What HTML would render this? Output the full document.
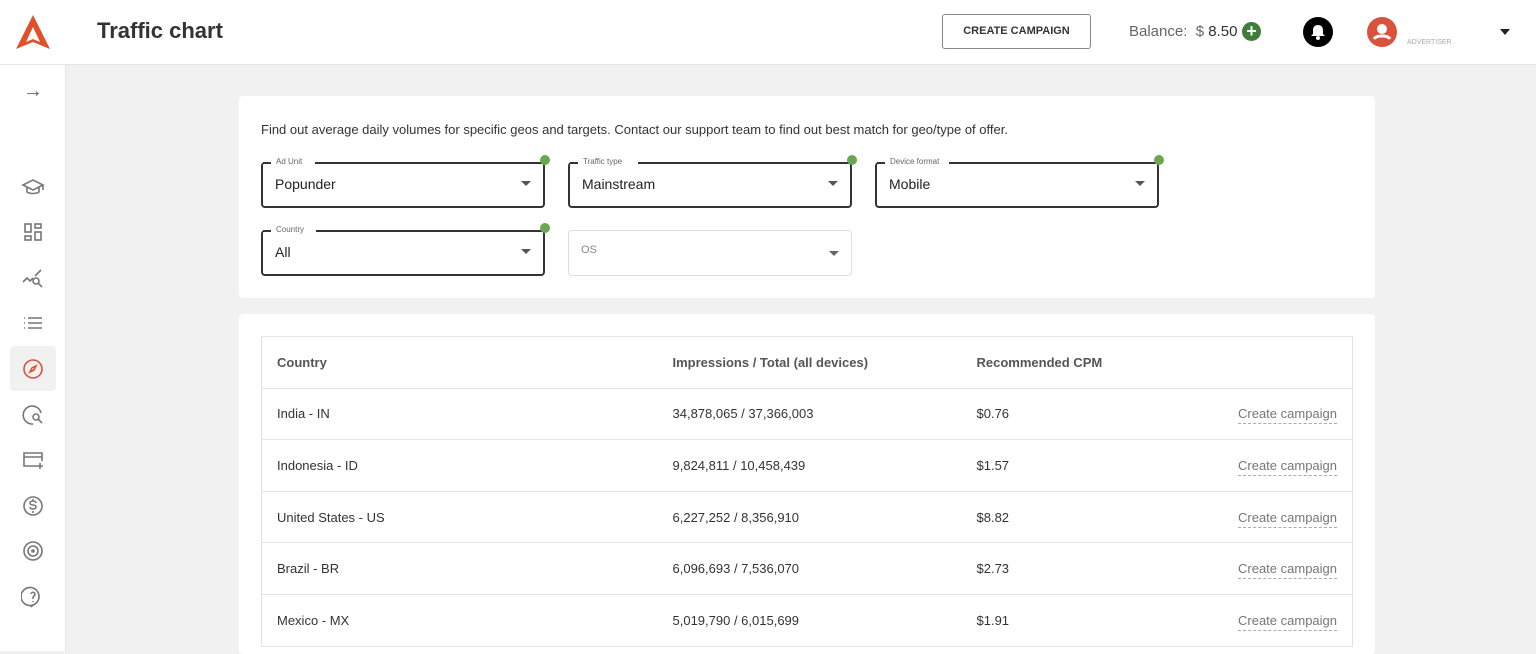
<!DOCTYPE html>
<html><head><style>
*{box-sizing:border-box;margin:0;padding:0}
body{width:1536px;height:651px;overflow:hidden;background:#f1f1f1;font-family:"Liberation Sans",sans-serif;color:#333;position:relative}
.hdr{position:absolute;left:0;top:0;width:1536px;height:65px;background:#fff;border-bottom:1px solid #e6e6e6}
.side{position:absolute;left:0;top:65px;width:66px;height:586px;background:#fff;border-right:1px solid #e6e6e6}
.ic{position:absolute;left:21px;width:24px;height:24px}
.card{position:absolute;background:#fff;border-radius:4px}
.fld{position:absolute;height:46px;border:2px solid #333;border-top:none;border-radius:4px}
.fld .lbl{position:absolute;top:-5px;left:10px;font-size:8px;color:#666;background:#fff;padding:0 3px;line-height:10px}
.fld .tl{position:absolute;top:0;height:2px;background:#333}
.fld .v{position:absolute;left:12px;top:14px;font-size:14px;color:#222}
.fld .ar{position:absolute;right:12px;top:19px;border-left:5px solid transparent;border-right:5px solid transparent;border-top:5px solid #555}
.dot{position:absolute;width:10px;height:10px;border-radius:50%;background:#6aa84f;right:-7px;top:-7px}
table{position:absolute;left:261px;top:336px;width:1092px;border-collapse:collapse;font-size:13px}
td{border-top:1px solid #e3e3e3;height:51.6px;padding-left:15px;color:#333}
tr:first-child td{color:#555;font-weight:bold}
td.c{text-align:right;padding-right:15px;color:#777}
td.c span{border-bottom:1px dashed #aaa;padding-bottom:2px}
</style></head><body>
<div class="hdr">
<svg style="position:absolute;left:15px;top:14px" width="36" height="36" viewBox="0 0 36 36"><path d="M18 1 L35 35 L18 28 L1 35 Z" fill="#e0502a"/><path d="M18 13 L25 28 L18 25 L11 28Z" fill="#fff"/></svg>
<div style="position:absolute;left:97px;top:18px;font-size:22px;font-weight:bold;color:#333">Traffic chart</div>
<div style="position:absolute;left:942px;top:14px;width:149px;height:35px;border:1px solid #888;border-radius:3px;font-size:11px;font-weight:bold;text-align:center;line-height:33px;color:#333">CREATE CAMPAIGN</div>
<div style="position:absolute;left:1129px;top:23px;font-size:15px;color:#666;white-space:nowrap">Balance:&nbsp; $ <span style="color:#333">8.50</span></div>
<div style="position:absolute;left:1242px;top:22px;width:19px;height:19px;border-radius:50%;background:#3f7d3a;color:#fff;font-size:18px;line-height:18px;text-align:center;font-weight:bold">+</div>
<div style="position:absolute;left:1303px;top:17px;width:30px;height:30px;border-radius:50%;background:#000"><svg width="30" height="30" viewBox="0 0 30 30"><path d="M15 8c-3 0-5 2-5 5v4l-2 2h14l-2-2v-4c0-3-2-5-5-5z" fill="#fff"/><circle cx="15" cy="21" r="2" fill="#fff"/></svg></div>
<div style="position:absolute;left:1367px;top:17px;width:30px;height:30px;border-radius:50%;background:#d9523b"><svg width="30" height="30" viewBox="0 0 30 30"><circle cx="15" cy="12" r="5" fill="#fff"/><path d="M7 22c2-4 14-4 16 0" stroke="#fff" stroke-width="3" fill="none"/></svg></div>
<div style="position:absolute;left:1407px;top:39px;font-size:7px;color:#aaa">ADVERTISER</div>
<div style="position:absolute;left:1500px;top:29px;border-left:5px solid transparent;border-right:5px solid transparent;border-top:6px solid #222"></div>
</div>
<div class="side">
<div style="position:absolute;left:23px;top:15px;font-size:20px;color:#666">→</div>
<div style="position:absolute;left:10px;top:281px;width:46px;height:45px;background:#f1f1f1;border-radius:4px"></div>
<svg class="ic" style="top:110px" viewBox="0 0 24 24" fill="none" stroke="#777" stroke-width="1.6"><path d="M2 10l10-5 10 5-10 5z M6 12v5c3 2 9 2 12 0v-5 M22 10v5"/></svg>
<svg class="ic" style="top:155px" viewBox="0 0 24 24" fill="none" stroke="#777" stroke-width="1.6"><rect x="4" y="4" width="6" height="8"/><rect x="14" y="4" width="6" height="4"/><rect x="4" y="16" width="6" height="4"/><rect x="14" y="12" width="6" height="8"/></svg>
<svg class="ic" style="top:201px" viewBox="0 0 24 24" fill="none" stroke="#777" stroke-width="1.6"><path d="M2 16l4-4 3 3 3-3M14 10l6-6"/><circle cx="15" cy="15" r="3"/><path d="M17 17l4 4"/></svg>
<svg class="ic" style="top:246px" viewBox="0 0 24 24" fill="none" stroke="#777" stroke-width="1.6"><path d="M3 7h1M3 12h1M3 17h1M7 7h14M7 12h14M7 17h14"/></svg>
<svg class="ic" style="top:292px" viewBox="0 0 24 24" fill="none" stroke="#d9523b" stroke-width="1.6"><circle cx="12" cy="12" r="9"/><path d="M15 9l-2 4-4 2 2-4z"/></svg>
<svg class="ic" style="top:338px" viewBox="0 0 24 24" fill="none" stroke="#777" stroke-width="1.6"><path d="M20 10A9 9 0 1 0 12 21"/><circle cx="15" cy="14" r="3"/><path d="M17 16l4 4"/></svg>
<svg class="ic" style="top:383px" viewBox="0 0 24 24" fill="none" stroke="#777" stroke-width="1.6"><path d="M16 18H3V5h18v8M3 9h18M19 15v6M16 18h6"/></svg>
<svg class="ic" style="top:429px" viewBox="0 0 24 24" fill="none" stroke="#777" stroke-width="1.6"><circle cx="12" cy="12" r="9"/><path d="M15 9c0-1-1-2-3-2s-3 1-3 2 1 2 3 2 3 1 3 2-1 2-3 2-3-1-3-2M12 5v2M12 17v2"/></svg>
<svg class="ic" style="top:474px" viewBox="0 0 24 24" fill="none" stroke="#777" stroke-width="1.6"><circle cx="12" cy="12" r="9"/><circle cx="12" cy="12" r="5"/><circle cx="12" cy="12" r="1"/></svg>
<svg class="ic" style="top:520px" viewBox="0 0 24 24" fill="none" stroke="#777" stroke-width="1.6"><path d="M12 20a9 9 0 1 1 0-17 9 9 0 0 1 0 17l-2 2"/><path d="M10 9a2 2 0 1 1 3 2c-1 1-1 1-1 3M12 16v1"/></svg>
</div>
<div class="card" style="left:239px;top:96px;width:1136px;height:202px">
<div style="position:absolute;left:22px;top:26px;font-size:13px;color:#333">Find out average daily volumes for specific geos and targets. Contact our support team to find out best match for geo/type of offer.</div>
</div>
<div class="fld" style="left:261px;top:162px;width:284px"><div class="tl" style="left:0;width:8px"></div><div class="tl" style="left:52px;right:0"></div><div class="lbl">Ad Unit</div><div class="v">Popunder</div><div class="ar"></div><div class="dot"></div></div>
<div class="fld" style="left:568px;top:162px;width:284px"><div class="tl" style="left:0;width:8px"></div><div class="tl" style="left:68px;right:0"></div><div class="lbl">Traffic type</div><div class="v">Mainstream</div><div class="ar"></div><div class="dot"></div></div>
<div class="fld" style="left:875px;top:162px;width:284px"><div class="tl" style="left:0;width:8px"></div><div class="tl" style="left:72px;right:0"></div><div class="lbl">Device format</div><div class="v">Mobile</div><div class="ar"></div><div class="dot"></div></div>
<div class="fld" style="left:261px;top:230px;width:284px"><div class="tl" style="left:0;width:8px"></div><div class="tl" style="left:53px;right:0"></div><div class="lbl">Country</div><div class="v">All</div><div class="ar"></div><div class="dot"></div></div>
<div class="fld" style="left:568px;top:230px;width:284px;height:46px;border:1px solid #ddd"><div class="v" style="top:13px;font-size:11px;color:#888">OS</div><div class="ar" style="border-top-color:#666;top:20px"></div></div>
<div class="card" style="left:239px;top:314px;width:1136px;height:340px"></div>
<table style="border:1px solid #e3e3e3">
<tr><td style="width:396px;border-top:none">Country</td><td style="width:304px;border-top:none">Impressions / Total (all devices)</td><td style="border-top:none">Recommended CPM</td><td style="border-top:none"></td></tr>
<tr><td>India - IN</td><td>34,878,065 / 37,366,003</td><td>$0.76</td><td class="c"><span>Create campaign</span></td></tr>
<tr><td>Indonesia - ID</td><td>9,824,811 / 10,458,439</td><td>$1.57</td><td class="c"><span>Create campaign</span></td></tr>
<tr><td>United States - US</td><td>6,227,252 / 8,356,910</td><td>$8.82</td><td class="c"><span>Create campaign</span></td></tr>
<tr><td>Brazil - BR</td><td>6,096,693 / 7,536,070</td><td>$2.73</td><td class="c"><span>Create campaign</span></td></tr>
<tr><td>Mexico - MX</td><td>5,019,790 / 6,015,699</td><td>$1.91</td><td class="c"><span>Create campaign</span></td></tr>
</table>
</body></html>
